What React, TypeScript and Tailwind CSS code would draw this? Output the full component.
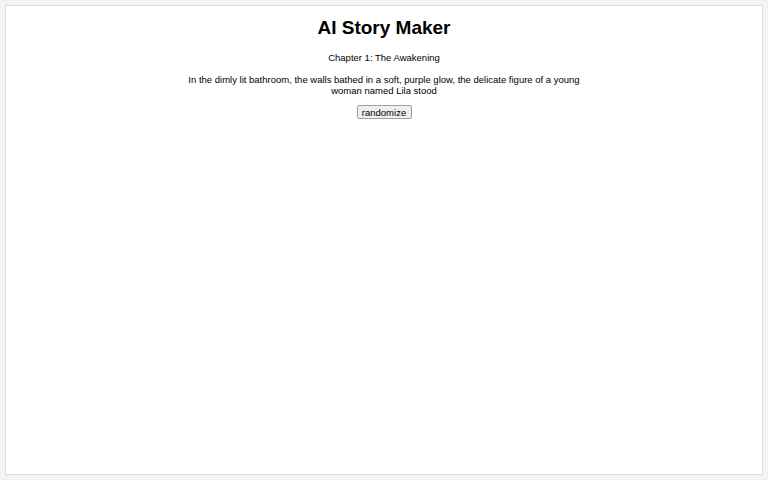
export default function App() {
  return (
    <div className="min-h-screen bg-[#f3f3f3] p-[5px] font-['Liberation_Sans',Arial,sans-serif] text-black">
      <div className="h-[470px] bg-white border border-[#dcdcdc] flex flex-col items-center">
        <h1 className="mt-[9px] text-[19px] font-bold leading-[26px]">AI Story Maker</h1>
        <p className="mt-[11px] text-[9.5px] leading-[11px]">Chapter 1: The Awakening</p>
        <p className="mt-[11px] max-w-[400px] text-center text-[9.5px] leading-[11px]">
          In the dimly lit bathroom, the walls bathed in a soft, purple glow, the delicate figure of a young woman named Lila stood
        </p>
        <button
          type="button"
          className="mt-[9px] w-[55px] h-[14px] text-[9.5px] leading-[11px] bg-[#efefef] border border-[#a0a0a0] rounded-[2px]"
        >
          randomize
        </button>
      </div>
    </div>
  );
}
